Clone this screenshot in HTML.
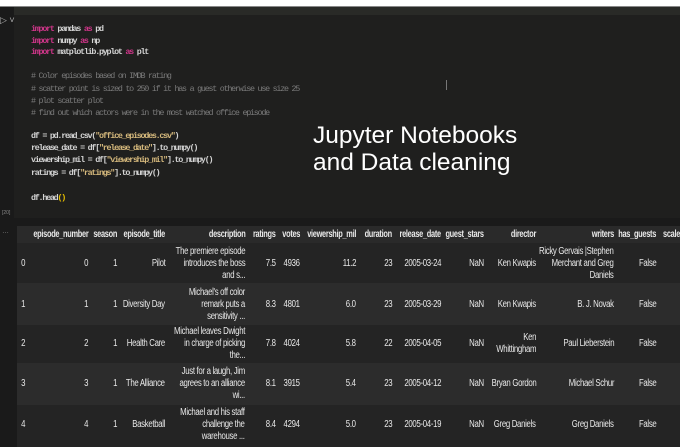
<!DOCTYPE html>
<html><head><meta charset="utf-8"><style>
*{margin:0;padding:0;box-sizing:border-box}
body{width:680px;height:447px;background:#1a1a1a;position:relative;overflow:hidden;font-family:"Liberation Sans",sans-serif;color:#e8e8e8}
.abs{position:absolute}
.code{position:absolute;left:31px;font-family:"Liberation Mono",monospace;font-size:8.4px;white-space:pre;color:#d4d4d4;letter-spacing:-1.25px;font-weight:bold}
.k{color:#d0368a}.c{color:#7a7a7a;font-weight:normal}.s{color:#d7ba7d}.b{color:#e8c000}
.t{position:absolute;font-size:10px;letter-spacing:-0.4px;text-align:right;line-height:11px;white-space:nowrap;transform:scaleX(0.78);transform-origin:right center}
.h{font-weight:bold;transform:scaleX(0.74)}
</style></head><body>
<div class="abs" style="left:0;top:0;width:680px;height:6px;background:#fff"></div>
<div class="abs" style="left:0;top:6px;width:680px;height:1px;background:#888"></div>
<div class="abs" style="left:14px;top:7px;width:666px;height:211px;background:#1f1f1e"></div>
<div class="abs" style="left:14px;top:7px;width:666px;height:8px;background:#292a27"></div>
<div class="abs" style="left:0;top:15px;font-size:9px;color:#aaa">▷ ˅</div>
<div class="abs" style="left:2px;top:210px;font-size:5px;color:#888">[20]</div>
<div class="abs" style="left:2px;top:228px;font-size:7px;color:#888">…</div>
<div class="code" style="top:24px"><span class="k">import</span> pandas <span class="k">as</span> pd</div>
<div class="code" style="top:36px"><span class="k">import</span> numpy <span class="k">as</span> np</div>
<div class="code" style="top:47px"><span class="k">import</span> matplotlib.pyplot <span class="k">as</span> plt</div>
<div class="code c" style="top:71px"># Color episodes based on IMDB rating</div>
<div class="code c" style="top:84px"># scatter point is sized to 250 if it has a guest otherwise use size 25</div>
<div class="code c" style="top:96px"># plot scatter plot</div>
<div class="code c" style="top:108px"># find out which actors were in the most watched office episode</div>
<div class="code" style="top:131px">df = pd.read_csv(<span class="s">"office_episodes.csv"</span>)</div>
<div class="code" style="top:143px">release_date = df[<span class="s">"release_date"</span>].to_numpy()</div>
<div class="code" style="top:155px">viewership_mil = df[<span class="s">"viewership_mil"</span>].to_numpy()</div>
<div class="code" style="top:168px">ratings = df[<span class="s">"ratings"</span>].to_numpy()</div>
<div class="code" style="top:193px">df.head<span class="b">()</span></div>
<div class="abs" style="left:313px;top:122px;font-size:24.5px;line-height:27px;color:#fff">Jupyter Notebooks<br>and Data cleaning</div>
<div class="abs" style="left:446px;top:80px;width:1px;height:10px;background:#777"></div>
<div class="abs" style="left:17px;top:226px;width:663px;height:17px;background:#2a2a2a"></div>
<div class="abs" style="left:17px;top:243px;width:663px;height:40px;background:#242424"></div>
<div class="abs" style="left:17px;top:283px;width:663px;height:42px;background:#2c2c2c"></div>
<div class="abs" style="left:17px;top:325px;width:663px;height:38px;background:#242424"></div>
<div class="abs" style="left:17px;top:363px;width:663px;height:42px;background:#2c2c2c"></div>
<div class="abs" style="left:17px;top:405px;width:663px;height:42px;background:#242424"></div>
<div id="tbl"></div>
<script>
var cols=[88,117,165,245,276,300,356,392,441,484,536,614,656];
var hdr=["episode_number","season","episode_title","description","ratings","votes","viewership_mil","duration","release_date","guest_stars","director","writers","has_guests"];
var rows=[
["0","1","Pilot","The premiere episode<br>introduces the boss<br>and s...","7.5","4936","11.2","23","2005-03-24","NaN","Ken Kwapis","Ricky Gervais |Stephen<br>Merchant and Greg<br>Daniels","False"],
["1","1","Diversity Day","Michael's off color<br>remark puts a<br>sensitivity ...","8.3","4801","6.0","23","2005-03-29","NaN","Ken Kwapis","B. J. Novak","False"],
["2","1","Health Care","Michael leaves Dwight<br>in charge of picking<br>the...","7.8","4024","5.8","22","2005-04-05","NaN","Ken<br>Whittingham","Paul Lieberstein","False"],
["3","1","The Alliance","Just for a laugh, Jim<br>agrees to an alliance<br>wi...","8.1","3915","5.4","23","2005-04-12","NaN","Bryan Gordon","Michael Schur","False"],
["4","1","Basketball","Michael and his staff<br>challenge the<br>warehouse ...","8.4","4294","5.0","23","2005-04-19","NaN","Greg Daniels","Greg Daniels","False"]];
var centers=[264,305,344,384,425];
var h="";
hdr.forEach(function(t,i){h+='<div class="t h" style="right:'+(680-cols[i])+'px;top:229px">'+t+'</div>';});
h+='<div class="t h" style="left:663px;top:229px;text-align:left;transform-origin:left center">scale</div>';
rows.forEach(function(r,ri){
 var c=centers[ri];
 h+='<div class="t" style="left:20px;top:'+(c-6)+'px">'+ri+'</div>';
 r.forEach(function(t,i){var n=t.split("<br>").length;h+='<div class="t" style="right:'+(680-cols[i])+'px;top:'+(c-n*6)+'px;line-height:12px">'+t+'</div>';});
});
document.getElementById("tbl").innerHTML=h;
</script>
</body></html>
